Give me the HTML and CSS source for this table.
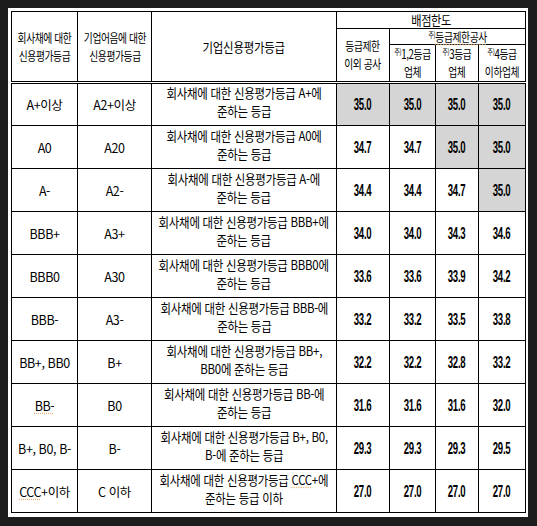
FILE: index.html
```html
<!DOCTYPE html>
<html lang="ko">
<head>
<meta charset="utf-8">
<link rel="stylesheet" href="styles.css">
</head>
<body>
<div class="frame">
<table class="grid">
<colgroup>
<col class="c1"><col class="c2"><col class="c3"><col class="c4"><col class="c5"><col class="c6"><col class="c7">
</colgroup>
<thead>
<tr class="hr1">
<th rowspan="3"><div class="fit"><span class="sq">회사채에 대한<br>신용평가등급</span></div></th>
<th rowspan="3"><div class="fit"><span class="sq">기업어음에 대한<br>신용평가등급</span></div></th>
<th rowspan="3"><div class="fit"><span class="wd">기업신용평가등급</span></div></th>
<th colspan="4" class="top"><div class="fit"><span class="md">배점한도</span></div></th>
</tr>
<tr class="hr2">
<th rowspan="2"><div class="fit"><span class="sq">등급제한<br>이외 공사</span></div></th>
<th colspan="3" class="top"><div class="fit"><span class="sq one"><sup>주)</sup><span class="sp">등급제한공사</span></span></div></th>
</tr>
<tr class="hr3">
<th><div class="fit"><span class="sq"><sup>주)</sup>1,2등급<br>업체</span></div></th>
<th><div class="fit"><span class="sq"><sup>주)</sup>3등급<br>업체</span></div></th>
<th><div class="fit"><span class="sq"><sup>주)</sup>4등급<br>이하업체</span></div></th>
</tr>
</thead>
<tbody>
<tr><td>A+이상</td><td>A2+이상</td><td class="desc"><div class="fit"><span class="wd">회사채에 대한 신용평가등급 A+에<br>준하는 등급</span></div></td><td class="num g"><span class="n">35.0</span></td><td class="num g"><span class="n">35.0</span></td><td class="num g"><span class="n">35.0</span></td><td class="num g"><span class="n">35.0</span></td></tr>
<tr><td>A0</td><td>A20</td><td class="desc"><div class="fit"><span class="wd">회사채에 대한 신용평가등급 A0에<br>준하는 등급</span></div></td><td class="num"><span class="n">34.7</span></td><td class="num"><span class="n">34.7</span></td><td class="num g"><span class="n">35.0</span></td><td class="num g"><span class="n">35.0</span></td></tr>
<tr><td>A-</td><td>A2-</td><td class="desc"><div class="fit"><span class="wd">회사채에 대한 신용평가등급 A-에<br>준하는 등급</span></div></td><td class="num"><span class="n">34.4</span></td><td class="num"><span class="n">34.4</span></td><td class="num"><span class="n">34.7</span></td><td class="num g"><span class="n">35.0</span></td></tr>
<tr><td>BBB+</td><td>A3+</td><td class="desc"><div class="fit"><span class="wd">회사채에 대한 신용평가등급 BBB+에<br>준하는 등급</span></div></td><td class="num"><span class="n">34.0</span></td><td class="num"><span class="n">34.0</span></td><td class="num"><span class="n">34.3</span></td><td class="num"><span class="n">34.6</span></td></tr>
<tr><td>BBB0</td><td>A30</td><td class="desc"><div class="fit"><span class="wd">회사채에 대한 신용평가등급 BBB0에<br>준하는 등급</span></div></td><td class="num"><span class="n">33.6</span></td><td class="num"><span class="n">33.6</span></td><td class="num"><span class="n">33.9</span></td><td class="num"><span class="n">34.2</span></td></tr>
<tr><td>BBB-</td><td>A3-</td><td class="desc"><div class="fit"><span class="wd">회사채에 대한 신용평가등급 BBB-에<br>준하는 등급</span></div></td><td class="num"><span class="n">33.2</span></td><td class="num"><span class="n">33.2</span></td><td class="num"><span class="n">33.5</span></td><td class="num"><span class="n">33.8</span></td></tr>
<tr><td>BB+, BB0</td><td>B+</td><td class="desc"><div class="fit"><span class="wd">회사채에 대한 신용평가등급 BB+,<br>BB0에 준하는 등급</span></div></td><td class="num"><span class="n">32.2</span></td><td class="num"><span class="n">32.2</span></td><td class="num"><span class="n">32.8</span></td><td class="num"><span class="n">33.2</span></td></tr>
<tr><td><span class="sp">BB-</span></td><td>B0</td><td class="desc"><div class="fit"><span class="wd">회사채에 대한 신용평가등급 BB-에<br>준하는 등급</span></div></td><td class="num"><span class="n">31.6</span></td><td class="num"><span class="n">31.6</span></td><td class="num"><span class="n">31.6</span></td><td class="num"><span class="n">32.0</span></td></tr>
<tr><td>B+, B0, B-</td><td>B-</td><td class="desc"><div class="fit"><span class="wd">회사채에 대한 신용평가등급 B+, B0,<br>B-에 준하는 등급</span></div></td><td class="num"><span class="n">29.3</span></td><td class="num"><span class="n">29.3</span></td><td class="num"><span class="n">29.3</span></td><td class="num"><span class="n">29.5</span></td></tr>
<tr><td><span class="sp">CCC</span>+이하</td><td>C 이하</td><td class="desc"><div class="fit"><span class="wd">회사채에 대한 신용평가등급 <span class="sp">CCC</span>+에<br>준하는 등급 이하</span></div></td><td class="num"><span class="n">27.0</span></td><td class="num"><span class="n">27.0</span></td><td class="num"><span class="n">27.0</span></td><td class="num"><span class="n">27.0</span></td></tr>
</tbody>
</table>
</div>
</body>
</html>
```
FILE: styles.css
```css
html, body {
  margin: 0;
  padding: 0;
  background: #1c1c1c;
}
body {
  font-family: "Noto Sans CJK KR", "Liberation Sans", sans-serif;
  color: #000;
}
.frame {
  width: 514px;
  margin: 8px 0 0 8px;
  padding: 3px 3px 4px 3px;
  background: #fff;
}
.grid {
  width: 514px;
  table-layout: fixed;
  border-collapse: collapse;
  border: 1px solid #000;
}
.c1 { width: 66px; }
.c2 { width: 74px; }
.c3 { width: 185px; }
.c4 { width: 53px; }
.c5 { width: 46px; }
.c6 { width: 43px; }
.c7 { width: 47px; }
th, td {
  border: 1px solid #000;
  padding: 0;
  text-align: center;
  vertical-align: middle;
  font-size: 12.5px;
  font-weight: normal;
  line-height: 17px;
  letter-spacing: -0.4px;
  white-space: nowrap;
}
.hr1 { height: 17px; }
.hr2 { height: 16px; }
.hr3 { height: 35px; }
thead tr:last-child th, .hr1 th[rowspan], .hr2 th[rowspan] {
  border-bottom: 3px double #000;
}
th.top { line-height: 14px; }
.fit {
  display: flex;
  justify-content: center;
}
.fit > span {
  display: block;
  white-space: nowrap;
  text-align: center;
  transform-origin: 50% 50%;
}
.sq {
  font-size: 12.5px;
  line-height: 18px;
  letter-spacing: -0.5px;
  transform: scaleX(0.78);
}
.sq.one { line-height: 14px; }
.md {
  font-size: 13px;
  line-height: 14px;
  transform: scaleX(0.86);
}
.wd {
  font-size: 13px;
  letter-spacing: -0.3px;
  transform: scaleX(0.88);
}
sup {
  font-size: 8px;
  line-height: 0;
  vertical-align: 4px;
  letter-spacing: -0.5px;
}
tbody tr { height: 43px; }
td.desc { line-height: 18px; padding-bottom: 5px; }
td.num {
  font-family: "Liberation Sans", sans-serif;
  font-weight: bold;
  font-size: 16px;
  letter-spacing: -0.5px;
}
.n {
  display: inline-block;
  transform: scaleX(0.6);
}
td.g { background: #d5d5d5; }
.sp {
  text-decoration: underline dotted #e9b27a;
  text-underline-offset: 2px;
}
```
